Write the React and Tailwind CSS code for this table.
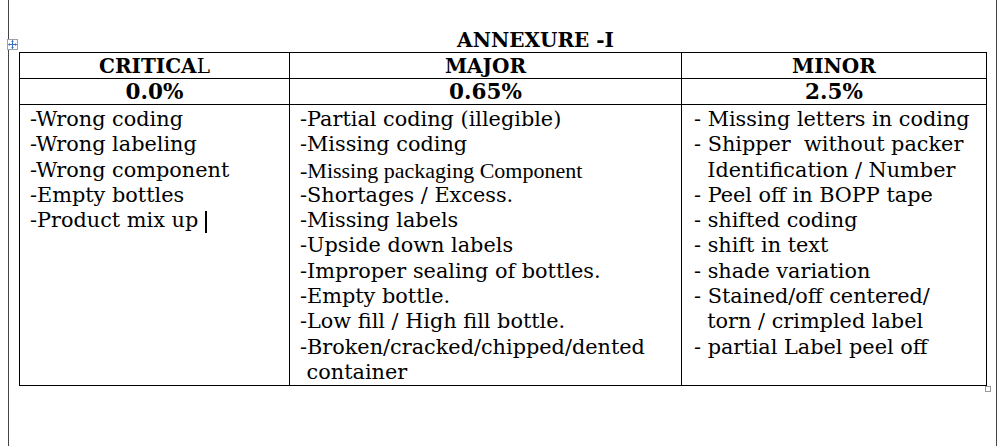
import React from 'react';

const critical = ['-Wrong coding', '-Wrong labeling', '-Wrong component', '-Empty bottles'];

const major = [
  '-Partial coding (illegible)',
  '-Missing coding',
  null,
  '-Shortages / Excess.',
  '-Missing labels',
  '-Upside down labels',
  '-Improper sealing of bottles.',
  '-Empty bottle.',
  '-Low fill / High fill bottle.',
  '-Broken/cracked/chipped/dented',
  '\u00a0container',
];

const minor = [
  '- Missing letters in coding',
  '- Shipper  without packer',
  '\u00a0\u00a0Identification / Number',
  '- Peel off in BOPP tape',
  '- shifted coding',
  '- shift in text',
  '- shade variation',
  '- Stained/off centered/',
  '\u00a0\u00a0torn / crimpled label',
  '- partial Label peel off',
];

const Line = ({ children }) => (
  <div className="h-[25.3px] leading-[25.3px] whitespace-pre">{children}</div>
);

const App = () => {
  return (
    <div
      className="relative w-[1002px] h-[446px] bg-white text-black overflow-hidden"
      style={{ fontFamily: '"DejaVu Serif", serif' }}
    >
      {/* page margin lines */}
      <div className="absolute left-[8px] top-0 h-full w-px bg-[#444]" />
      <div className="absolute left-[996px] top-0 h-full w-px bg-[#444]" />

      {/* table move handle */}
      <div className="absolute left-[7px] top-[39px] w-[11px] h-[11px] border border-[#9aa3ad] bg-white flex items-center justify-center">
        <svg width="9" height="9" viewBox="0 0 9 9">
          <path d="M4.5 0.5v8M0.5 4.5h8" stroke="#3b6fc6" strokeWidth="1" />
          <path d="M4.5 0l-1.5 1.8h3zM4.5 9l-1.5-1.8h3zM0 4.5l1.8-1.5v3zM9 4.5l-1.8-1.5v3z" fill="#3b6fc6" />
        </svg>
      </div>

      <div className="pl-[19px] pt-[28px]">
        <div className="w-[967px] pl-[66px] text-center text-[20px] font-bold leading-[24px]">ANNEXURE -I</div>
        <table className="w-[967px] border-collapse table-fixed text-[20.8px]">
          <colgroup>
            <col className="w-[270px]" />
            <col className="w-[392px]" />
            <col className="w-[305px]" />
          </colgroup>
          <tbody>
            <tr className="h-[26px] text-[20px]">
              <td className="border border-black text-center font-bold leading-[24px] p-0">
                CRITICA<span className="font-normal">L</span>
              </td>
              <td className="border border-black text-center font-bold leading-[24px] p-0">MAJOR</td>
              <td className="border border-black text-center font-bold leading-[24px] p-0">MINOR</td>
            </tr>
            <tr className="h-[26px] text-[21.5px]">
              <td className="border border-black text-center font-bold leading-[24px] p-0">0.0%</td>
              <td className="border border-black text-center font-bold leading-[24px] p-0">0.65%</td>
              <td className="border border-black text-center font-bold leading-[24px] p-0">2.5%</td>
            </tr>
            <tr className="h-[281px]">
              <td className="border border-black align-top pl-[10px] pt-[2px]">
                {critical.map((t) => (
                  <Line key={t}>{t}</Line>
                ))}
                <Line>
                  -Product mix up <span className="inline-block w-[2px] h-[22px] bg-black align-middle" />
                </Line>
              </td>
              <td className="border border-black align-top pl-[10px] pt-[2px]">
                {major.map((t, i) =>
                  t === null ? (
                    <div
                      key={i}
                      className="h-[25.3px] leading-[25.3px] text-[22px] whitespace-pre"
                      style={{ fontFamily: '"Liberation Serif", serif' }}
                    >
                      -Missing packaging Component
                    </div>
                  ) : (
                    <Line key={i}>{t}</Line>
                  )
                )}
              </td>
              <td className="border border-black align-top pl-[12px] pt-[2px]">
                {minor.map((t, i) => (
                  <Line key={i}>{t}</Line>
                ))}
              </td>
            </tr>
          </tbody>
        </table>
      </div>

      {/* table resize handle */}
      <div className="absolute left-[985px] top-[386px] w-[6px] h-[6px] border border-[#9a9a9a] bg-white" />
    </div>
  );
};

export default App;
